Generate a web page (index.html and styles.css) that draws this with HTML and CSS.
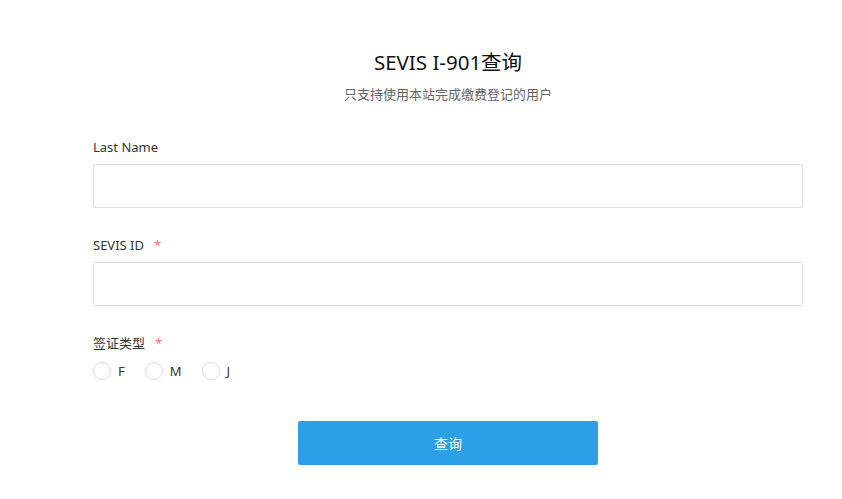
FILE: index.html
```html
<!DOCTYPE html>
<html lang="zh">
<head>
<meta charset="utf-8">
<title>SEVIS I-901查询</title>
<link rel="stylesheet" href="styles.css">
</head>
<body>
<div class="page">
  <h1 class="title">SEVIS I-901查询</h1>
  <p class="subtitle">只支持使用本站完成缴费登记的用户</p>
  <form class="form">
    <div class="field">
      <label class="label">Last Name</label>
      <input class="input" type="text">
    </div>
    <div class="field">
      <label class="label">SEVIS ID<span class="req">*</span></label>
      <input class="input" type="text">
    </div>
    <div class="field">
      <label class="label">签证类型<span class="req">*</span></label>
      <div class="radios">
        <label class="radio"><span class="circle"></span>F</label>
        <label class="radio"><span class="circle"></span>M</label>
        <label class="radio"><span class="circle"></span>J</label>
      </div>
    </div>
    <div class="actions">
      <button class="btn" type="button">查询</button>
    </div>
  </form>
</div>
</body>
</html>
```
FILE: styles.css
```css
* { box-sizing: border-box; }
html, body { margin: 0; padding: 0; background: #fff; }
body {
  font-family: "Noto Sans", "Noto Sans CJK SC", sans-serif;
  color: #333;
}
.page {
  width: 710px;
  margin-left: 93px;
  padding-top: 50px;
}
.title {
  margin: 0;
  text-align: center;
  font-size: 20.5px;
  line-height: 24px;
  font-weight: 400;
  color: #111;
}
.subtitle {
  margin: 11px 0 0;
  text-align: center;
  font-size: 13px;
  line-height: 18px;
  color: #666;
}
.form { margin-top: 35px; }
.field { display: flex; flex-direction: column; margin-bottom: 28px; }
.field:nth-child(3) { margin-bottom: 0; }
.label {
  font-size: 13px;
  line-height: 18px;
  color: #333;
  margin-bottom: 8px;
}
.req { color: #f56c6c; margin-left: 10px; }
.input {
  height: 44px;
  width: 100%;
  border: 1px solid #dedede;
  border-radius: 2px;
  outline: none;
  padding: 0 10px;
  font-size: 14px;
}
.radios { display: flex; gap: 20px; margin-top: 2px; }
.radio {
  display: flex;
  align-items: center;
  gap: 7px;
  font-size: 13px;
  line-height: 18px;
  color: #333;
}
.circle {
  width: 18px;
  height: 18px;
  border: 1px solid #dcdcdc;
  border-radius: 50%;
  background: #fff;
}
.actions { display: flex; justify-content: center; margin-top: 41px; }
.btn {
  width: 300px;
  height: 44px;
  border: 0;
  border-radius: 2px;
  background: #2d9fe6;
  color: #fff;
  font-family: "Noto Sans", "Noto Sans CJK SC", sans-serif;
  font-size: 14px;
  cursor: pointer;
}
```
